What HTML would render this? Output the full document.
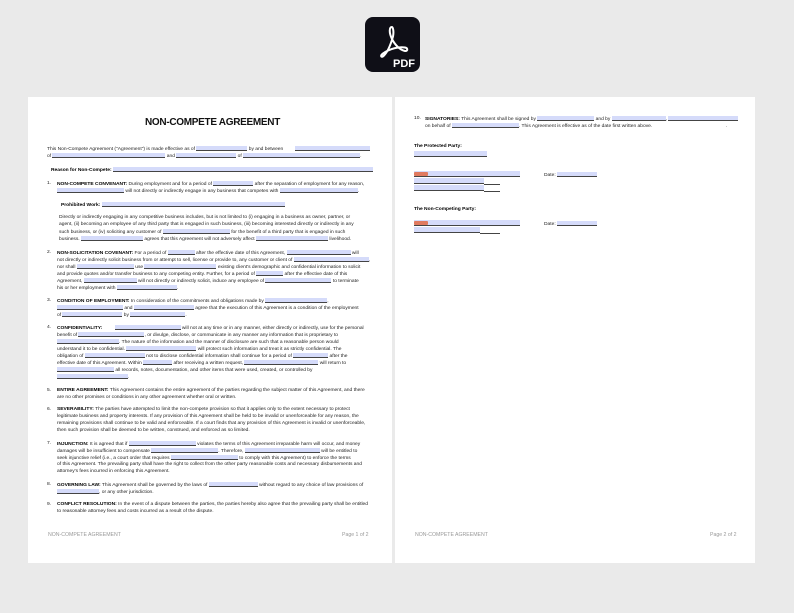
<!DOCTYPE html>
<html><head><meta charset="utf-8"><style>
*{margin:0;padding:0;box-sizing:border-box}
body{width:794px;height:613px;background:#eaeaea;position:relative;overflow:hidden;font-family:"Liberation Sans",sans-serif}
.pg{position:absolute;background:#fff;top:97px;height:466px}
.l{position:absolute;font-size:4.9px;line-height:6px;color:#222;white-space:nowrap}
.l b{color:#000}
i{display:inline-block;height:5px;background:#d5dbfa;border-bottom:0.6px solid #444;vertical-align:-1px}
.n{position:absolute;font-size:4.9px;color:#222}
.ft{position:absolute;top:532px;font-size:5.2px;color:#999}
</style></head><body>
<div style="position:absolute;left:365px;top:17px;width:55px;height:55px;background:#0f0f17;border-radius:8px">
<svg width="55" height="55" viewBox="0 0 55 55"><path d="M27 10c-3 0 -3 6 0 12c3 6 8 11 13 12c3 0.5 3-3 0-3.5c-6-1-15 1-22 6c-3 2-2 5 1 2c4-4 7-12 9-19c1-5 0-9-1-9.5z" fill="none" stroke="#fff" stroke-width="2" stroke-linejoin="round"/><text x="28" y="50" font-family="Liberation Sans" font-weight="bold" font-size="11" fill="#fff">PDF</text></svg></div>

<div class="pg" style="left:28px;width:364px"></div>
<div class="pg" style="left:395px;width:360px"></div>

<div class="l" style="left:145px;top:117px;font-size:10px;line-height:12px;font-weight:bold;color:#111;letter-spacing:-0.3px">NON-COMPETE AGREEMENT</div>

<div class="l" style="left:47px;top:146px">This Non-Compete Agreement ("Agreement") is made effective as of <i style="width:51px"></i> by and between &nbsp;&nbsp;&nbsp;&nbsp;&nbsp;&nbsp;&nbsp;&nbsp;<i style="width:75px"></i></div>
<div class="l" style="left:47px;top:153px">of <i style="width:113px"></i> and <i style="width:60px"></i> of <i style="width:117px"></i>.</div>
<div class="l" style="left:51px;top:167px"><b>Reason for Non-Compete:</b> <i style="width:260px"></i></div>

<div class="n" style="left:47px;top:181px">1.</div>
<div class="l" style="left:57px;top:181px"><b>NON-COMPETE CONVENANT:</b> During employment and for a period of <i style="width:40px"></i> after the separation of employment for any reason,</div>
<div class="l" style="left:57px;top:188px"><i style="width:67px"></i> will not directly or indirectly engage in any business that competes with <i style="width:78px"></i>.</div>
<div class="l" style="left:61px;top:202px"><b>Prohibited Work:</b> <i style="width:183px"></i></div>
<div class="l" style="left:59px;top:215px">Directly or indirectly engaging in any competitive business includes, but is not limited to (i) engaging in a business as owner, partner, or</div>
<div class="l" style="left:59px;top:222px">agent, (ii) becoming an employee of any third party that is engaged in such business, (iii) becoming interested directly or indirectly in any</div>
<div class="l" style="left:59px;top:229px">such business, or (iv) soliciting any customer of <i style="width:67px"></i> for the benefit of a third party that is engaged in such</div>
<div class="l" style="left:59px;top:236px">business. <i style="width:62px"></i> agrees that this Agreement will not adversely affect <i style="width:72px"></i> livelihood.</div>

<div class="n" style="left:47px;top:250px">2.</div>
<div class="l" style="left:57px;top:250px"><b>NON-SOLICITATION COVENANT:</b> For a period of <i style="width:27px"></i> after the effective date of this Agreement, <i style="width:64px"></i> will</div>
<div class="l" style="left:57px;top:257px">not directly or indirectly solicit business from or attempt to sell, license or provide to, any customer or client of <i style="width:75px"></i>,</div>
<div class="l" style="left:57px;top:264px">nor shall <i style="width:57px"></i> use <i style="width:72px"></i> existing client's demographic and confidential information to solicit</div>
<div class="l" style="left:57px;top:271px">and provide quotes and/or transfer business to any competing entity. Further, for a period of <i style="width:27px"></i> after the effective date of this</div>
<div class="l" style="left:57px;top:278px">Agreement, <i style="width:53px"></i> will not directly or indirectly solicit, induce any employee of <i style="width:66px"></i> to terminate</div>
<div class="l" style="left:57px;top:285px">his or her employment with <i style="width:60px"></i>.</div>

<div class="n" style="left:47px;top:298px">3.</div>
<div class="l" style="left:57px;top:298px"><b>CONDITION OF EMPLOYMENT:</b> In consideration of the commitments and obligations made by <i style="width:62px"></i>,</div>
<div class="l" style="left:57px;top:305px"><i style="width:66px"></i> and <i style="width:60px"></i> agree that the execution of this Agreement is a condition of the employment</div>
<div class="l" style="left:57px;top:312px">of <i style="width:60px"></i> by <i style="width:55px"></i>.</div>

<div class="n" style="left:47px;top:325px">4.</div>
<div class="l" style="left:57px;top:325px"><b>CONFIDENTIALITY:</b> &nbsp;&nbsp;&nbsp;&nbsp;&nbsp;&nbsp;&nbsp;&nbsp;<i style="width:66px"></i> will not at any time or in any manner, either directly or indirectly, use for the personal</div>
<div class="l" style="left:57px;top:332px">benefit of <i style="width:66px"></i>, or divulge, disclose, or communicate in any manner any information that is proprietary to</div>
<div class="l" style="left:57px;top:339px"><i style="width:62px"></i>. The nature of the information and the manner of disclosure are such that a reasonable person would</div>
<div class="l" style="left:57px;top:346px">understand it to be confidential. <i style="width:70px"></i> will protect such information and treat it as strictly confidential. The</div>
<div class="l" style="left:57px;top:353px">obligation of <i style="width:60px"></i> not to disclose confidential information shall continue for a period of <i style="width:35px"></i> after the</div>
<div class="l" style="left:57px;top:360px">effective date of this Agreement. Within <i style="width:29px"></i> after receiving a written request, <i style="width:74px"></i> will return to</div>
<div class="l" style="left:57px;top:367px"><i style="width:57px"></i> all records, notes, documentation, and other items that were used, created, or controlled by</div>
<div class="l" style="left:57px;top:374px"><i style="width:71px"></i>.</div>

<div class="n" style="left:47px;top:388px">5.</div>
<div class="l" style="left:57px;top:388px"><b>ENTIRE AGREEMENT:</b> This Agreement contains the entire agreement of the parties regarding the subject matter of this Agreement, and there</div>
<div class="l" style="left:57px;top:395px">are no other promises or conditions in any other agreement whether oral or written.</div>

<div class="n" style="left:47px;top:407px">6.</div>
<div class="l" style="left:57px;top:407px"><b>SEVERABILITY:</b> The parties have attempted to limit the non-compete provision so that it applies only to the extent necessary to protect</div>
<div class="l" style="left:57px;top:414px">legitimate business and property interests. If any provision of this Agreement shall be held to be invalid or unenforceable for any reason, the</div>
<div class="l" style="left:57px;top:421px">remaining provisions shall continue to be valid and enforceable. If a court finds that any provision of this Agreement is invalid or unenforceable,</div>
<div class="l" style="left:57px;top:428px">then such provision shall be deemed to be written, construed, and enforced as so limited.</div>

<div class="n" style="left:47px;top:441px">7.</div>
<div class="l" style="left:57px;top:441px"><b>INJUNCTION:</b> It is agreed that if <i style="width:67px"></i> violates the terms of this Agreement irreparable harm will occur, and money</div>
<div class="l" style="left:57px;top:448px">damages will be insufficient to compensate <i style="width:67px"></i>. Therefore, <i style="width:75px"></i> will be entitled to</div>
<div class="l" style="left:57px;top:455px">seek injunctive relief (i.e., a court order that requires <i style="width:67px"></i> to comply with this Agreement) to enforce the terms</div>
<div class="l" style="left:57px;top:462px">of this Agreement. The prevailing party shall have the right to collect from the other party reasonable costs and necessary disbursements and</div>
<div class="l" style="left:57px;top:469px">attorney's fees incurred in enforcing this Agreement.</div>

<div class="n" style="left:47px;top:482px">8.</div>
<div class="l" style="left:57px;top:482px"><b>GOVERNING LAW:</b> This Agreement shall be governed by the laws of <i style="width:49px"></i> without regard to any choice of law provisions of</div>
<div class="l" style="left:57px;top:489px"><i style="width:42px"></i>, or any other jurisdiction.</div>

<div class="n" style="left:47px;top:502px">9.</div>
<div class="l" style="left:57px;top:502px"><b>CONFLICT RESOLUTION:</b> In the event of a dispute between the parties, the parties hereby also agree that the prevailing party shall be entitled</div>
<div class="l" style="left:57px;top:509px">to reasonable attorney fees and costs incurred as a result of the dispute.</div>

<div class="ft" style="left:48px">NON-COMPETE AGREEMENT</div>
<div class="ft" style="left:342px">Page 1 of 2</div>

<div class="n" style="left:414px;top:116px">10.</div>
<div class="l" style="left:425px;top:116px"><b>SIGNATORIES:</b> This Agreement shall be signed by <i style="width:57px"></i> and by <i style="width:54px"></i>, <i style="width:70px"></i></div>
<div class="l" style="left:425px;top:123px">on behalf of <i style="width:67px"></i>. This Agreement is effective as of the date first written above. <span style="margin-left:72px">.</span></div>

<div class="l" style="left:414px;top:144px"><b>The Protected Party:</b></div>
<div style="position:absolute;left:414px;top:151px;width:73px;height:6px;background:#d5dbfa;border-bottom:0.7px solid #444"></div>
<div style="position:absolute;left:414px;top:171px;width:106px;height:6px;background:#d5dbfa;border-bottom:0.7px solid #444"></div>
<div style="position:absolute;left:414px;top:172px;width:14px;height:3.5px;background:#e07a60;border-radius:1px"></div>
<div style="position:absolute;left:414px;top:178px;width:70px;height:6px;background:#d5dbfa;border-bottom:0.7px solid #444"></div>
<div style="position:absolute;left:414px;top:185px;width:70px;height:6px;background:#d5dbfa;border-bottom:0.7px solid #444"></div>
<div style="position:absolute;left:484px;top:184px;width:16px;border-bottom:0.7px solid #444"></div>
<div style="position:absolute;left:484px;top:191px;width:16px;border-bottom:0.7px solid #444"></div>
<div class="l" style="left:544px;top:172px">Date: <i style="width:40px"></i></div>

<div class="l" style="left:414px;top:207px"><b>The Non-Competing Party:</b></div>
<div style="position:absolute;left:414px;top:220px;width:106px;height:6px;background:#d5dbfa;border-bottom:0.7px solid #444"></div>
<div style="position:absolute;left:414px;top:221px;width:14px;height:3.5px;background:#e07a60;border-radius:1px"></div>
<div style="position:absolute;left:414px;top:227px;width:66px;height:6px;background:#d5dbfa;border-bottom:0.7px solid #444"></div>
<div style="position:absolute;left:480px;top:233px;width:20px;border-bottom:0.7px solid #444"></div>
<div class="l" style="left:544px;top:221px">Date: <i style="width:40px"></i></div>

<div class="ft" style="left:415px">NON-COMPETE AGREEMENT</div>
<div class="ft" style="left:710px">Page 2 of 2</div>
</body></html>
